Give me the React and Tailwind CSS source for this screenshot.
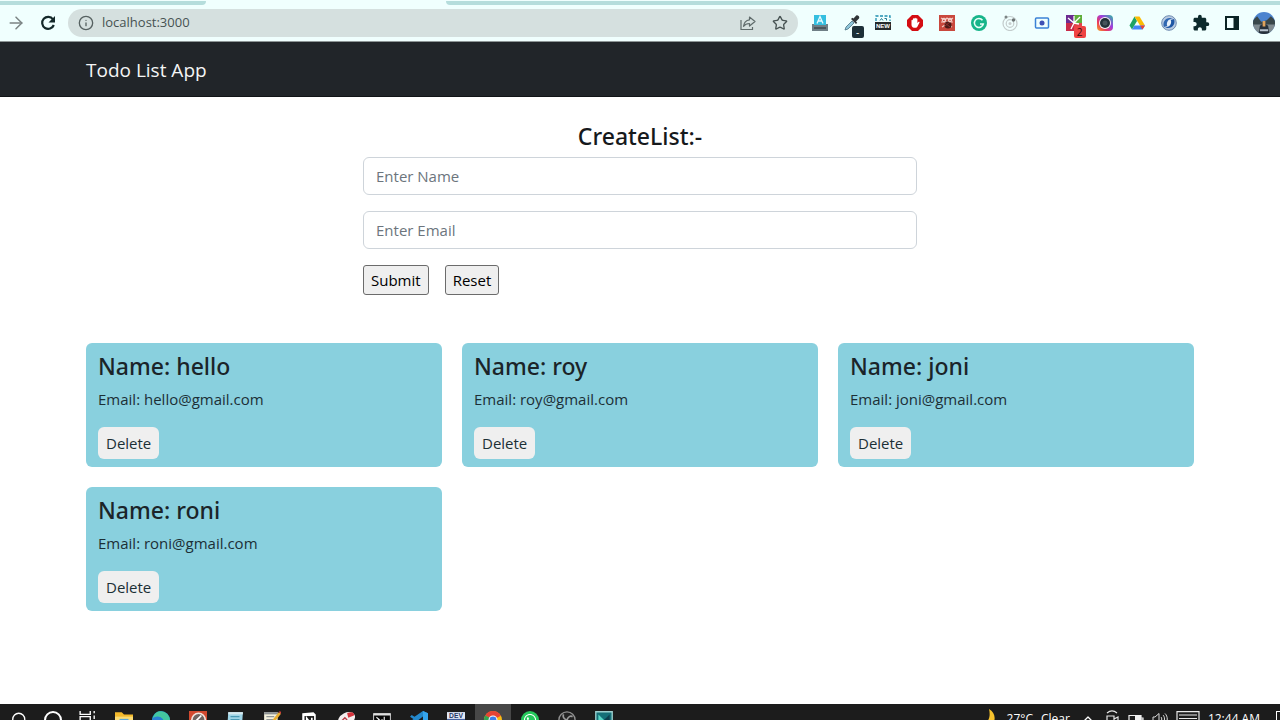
// src/App.jsx
import React, { useState } from 'react';
import { ArrowRight, Info, Star, ChevronUp, Search } from 'lucide-react';
import { MdExtension } from 'react-icons/md';
import { FaWhatsapp } from 'react-icons/fa';

const initialUsers = [
  { id: 1, name: 'hello', email: 'hello@gmail.com' },
  { id: 2, name: 'roy', email: 'roy@gmail.com' },
  { id: 3, name: 'joni', email: 'joni@gmail.com' },
  { id: 4, name: 'roni', email: 'roni@gmail.com' },
];

const Svg = ({ children, className = 'h-4 w-4' }) => (
  <svg viewBox="0 0 16 16" className={className} fill="none" aria-hidden="true">
    {children}
  </svg>
);

const ShareIcon = () => (
  <Svg className="h-4 w-4">
    <path d="M1 5v9.5h11.5V12" stroke="#5f6b6b" strokeWidth="1.2" />
    <path d="M9.5 2l5.500 4.500-5.500 4.500V8.500c-3 0-4.600.8-6 2.800.4-3.300 2.200-6 6-6.500z" stroke="#5f6b6b" strokeWidth="1.2" strokeLinejoin="round" />
  </Svg>
);

const ReloadIcon = () => (
  <Svg className="h-4 w-4">
    <path d="M13 4.300A6 6 0 1 0 13.800 10" stroke="currentColor" strokeWidth="2.200" />
    <path d="M15 1v6.500H8.500z" fill="currentColor" />
  </Svg>
);

// Toolbar extensions
const extensions = [
  {
    name: 'Scanner',
    icon: (
      <Svg>
        <path d="M0 9h16v7H0z" fill="#6f7f86" />
        <path d="M2 12h12v2H2z" fill="#49575d" />
        <path d="M2 0h12v10H2z" fill="#35bfe0" />
        <path d="M5 8.500l3-7 3 7M6.200 6h3.600" stroke="#e8fbff" strokeWidth="1.300" />
      </Svg>
    ),
  },
  {
    name: 'Color picker',
    badge: '-',
    badgeClass: 'bg-[#1d3038] text-white',
    icon: (
      <Svg>
        <path d="M1 15l1-3 6-6 2 2-6 6z" fill="#8fc6da" stroke="#4a7181" strokeWidth=".8" />
        <path d="M7 4l5 5 1.200-1.200-1.200-1.300 3-3c1-1.800-1.200-4-3-2.800L9.500 3.600 8.300 2.700z" fill="#303538" />
      </Svg>
    ),
  },
  {
    name: 'New tab',
    icon: (
      <Svg>
        <path d="M1 6V1h14v5" stroke="#1f8fb0" strokeWidth="1.300" strokeDasharray="3 1.500" />
        <path d="M5 5.500l1.500-2 1.500 2M9.500 3.500h2v2" stroke="#247b91" />
        <path d="M0 7h16v8H0z" fill="#26292b" />
        <text x="8" y="13.200" textAnchor="middle" fontSize="6" fontWeight="700" fill="#fff" fontFamily="Liberation Sans, sans-serif">NEW</text>
      </Svg>
    ),
  },
  {
    name: 'Ad blocker',
    icon: (
      <Svg>
        <path d="M5 0h6l5 5v6l-5 5H5l-5-5V5z" fill="#d40d12" />
        <path d="M4.500 8V5.500c0-.9 1.400-.9 1.400 0V4c0-1 1.500-1 1.500 0v-.5c0-1 1.500-1 1.500 0V4c0-1 1.500-1 1.500 0v4l1-1c.8-.6 1.500.1 1 .8l-2.200 4.200c-1 1.500-5.700 1.200-5.700-2z" fill="#fff" />
      </Svg>
    ),
  },
  {
    name: 'Bug tracker',
    icon: (
      <Svg>
        <path d="M0 0h16v16H0z" fill="#c9483d" />
        <path d="M2 3l4 2 2-2 3 2 3-2M2 7h12M3 12l3-2M13 12l-3-2" stroke="#f4c9c2" strokeWidth="1.200" />
        <circle cx="9" cy="10" r="3.500" fill="#4b1a17" />
        <path d="M6 8l5 4M11 7l-5 4" stroke="#8e302a" />
        <circle cx="5" cy="5" r="1.800" stroke="#f8ded9" />
        <circle cx="11" cy="5" r="1.800" stroke="#f8ded9" />
      </Svg>
    ),
  },
  {
    name: 'Grammar',
    icon: (
      <Svg>
        <circle cx="8" cy="8" r="8" fill="#17b58a" />
        <path d="M11.500 5.200A4.500 4.500 0 1 0 12.300 9H9" stroke="#eafff8" strokeWidth="1.500" />
      </Svg>
    ),
  },
  {
    name: 'Orbit',
    icon: (
      <Svg>
        <circle cx="8" cy="8.500" r="7" stroke="#c3cccc" strokeWidth="1.200" />
        <circle cx="8" cy="8.500" r="3.800" stroke="#c3cccc" strokeWidth="1.200" />
        <circle cx="8" cy="8.500" r="1.500" fill="#c8cfcf" />
        <circle cx="4" cy="2" r="1.500" fill="#7c8585" />
        <circle cx="11.500" cy="5" r="1.700" fill="#6c7474" />
      </Svg>
    ),
  },
  {
    name: 'Screen capture',
    icon: (
      <Svg>
        <rect x="1.500" y="3" width="13" height="10" rx="1" stroke="#3b82d6" strokeWidth="1.500" />
        <circle cx="8" cy="8" r="2.500" fill="#3f51b5" />
      </Svg>
    ),
  },
  {
    name: 'Shopping',
    badge: '2',
    badgeClass: 'bg-[#ef4444] text-[#3a0d0d]',
    icon: (
      <Svg>
        <path d="M0 0h8v8H0z" fill="#6c2c91" />
        <path d="M8 0h8v8H8z" fill="#5fae3a" />
        <path d="M0 8h8v8H0z" fill="#c92c4a" />
        <path d="M8 8h8v8H8z" fill="#e2434a" />
        <path d="M2 3l6 5 6-6M8 8l-3 6M8 1v7M8 8l5 1" stroke="#fff" strokeWidth="1.300" />
      </Svg>
    ),
  },
  {
    name: 'Camera',
    icon: (
      <Svg>
        <defs>
          <linearGradient id="cam" x1="0" y1="1" x2="1" y2="0">
            <stop offset="0" stopColor="#f5ad27" />
            <stop offset=".3" stopColor="#ec3a5b" />
            <stop offset=".6" stopColor="#a03de0" />
            <stop offset="1" stopColor="#28bfa0" />
          </linearGradient>
        </defs>
        <rect width="16" height="16" rx="4" fill="url(#cam)" />
        <circle cx="8" cy="8" r="6" fill="#f4f4f4" />
        <circle cx="8" cy="8" r="5" fill="#24323a" />
        <circle cx="8" cy="8" r="2.500" fill="#47545b" />
      </Svg>
    ),
  },
  {
    name: 'Drive',
    icon: (
      <Svg>
        <path d="M5.500 1.500L.5 10.500 3 14.500 8 6z" fill="#1ea362" />
        <path d="M5.500 1.500h5L16 10.500h-5z" fill="#fbbc04" />
        <path d="M5.500 10.500H16l-2.500 4H3z" fill="#4285f4" />
        <path d="M11 10.500h5l-2.500 4z" fill="#ea4335" />
      </Svg>
    ),
  },
  {
    name: 'Sync',
    icon: (
      <Svg>
        <circle cx="8" cy="8" r="7.300" fill="#b9cbe2" stroke="#6f8bb0" />
        <path d="M3 12C1 7 5 1 12 3.500 7 4 6 6 6 11z" fill="#2f67b1" />
        <path d="M13 4c2 5-2 11-9 8.500C9 12 10 10 10 5z" fill="#1f57a5" />
        <ellipse cx="8" cy="8" rx="1.800" ry="3" transform="rotate(25 8 8)" fill="#e9f1fa" />
      </Svg>
    ),
  },
  { name: 'Extensions', icon: <MdExtension className="h-[18px] w-[18px] text-[#0c2a2c]" /> },
  {
    name: 'Side panel',
    icon: (
      <Svg>
        <path d="M1 1h14v14H1z" fill="#0b2425" />
        <path d="M3 3h6.500v10H3z" fill="#f0fffe" />
      </Svg>
    ),
  },
  {
    name: 'Profile',
    icon: (
      <Svg className="h-[22px] w-[22px]">
        <clipPath id="avatar">
          <circle cx="8" cy="8" r="8" />
        </clipPath>
        <g clipPath="url(#avatar)">
          <path d="M0 0h16v16H0z" fill="#4b84cf" />
          <path d="M0 6l3-3 3 4 4-1 3-3 3 3v4H0z" fill="#39474a" />
          <path d="M0 9h16v7H0z" fill="#7f8a8f" />
          <path d="M5 10l3-2 3 2 1 6H4z" fill="#27313b" />
          <path d="M7 6.500h2v4H7z" fill="#e0a35c" />
          <path d="M5 12.500h6v1.500H5z" fill="#b9c3cf" />
        </g>
      </Svg>
    ),
  },
];

// Pinned taskbar apps
const taskbarApps = [
  {
    name: 'File Explorer',
    icon: <><path d="M0 1h6l2 2h8v12H0z" fill="#f3b92b" /><path d="M0 5h16v10H0z" fill="#fbdc74" /><path d="M4 7h8v3H4z" fill="#5aa7d8" /></>,
  },
  {
    name: 'Edge',
    icon: <><circle cx="8" cy="8" r="8" fill="#1786d0" /><path d="M5 .6c6-2 11 3 11 7.400 0 2-2 3-6 2 1-4-4-6-9.500-3C1 4 3 1.500 5 .6z" fill="#43c7a0" /><path d="M.2 7C3 4 8 4 9.500 8L7 9c-1 2 0 4 2 6C3 15 0 11 .2 7z" fill="#2a7fd4" /></>,
  },
  {
    name: 'Recorder',
    icon: <><path d="M0 0h16v16H0z" fill="#d2492f" /><circle cx="8.500" cy="8" r="6" fill="#6f6461" stroke="#f2e2dc" strokeWidth="1.500" /><path d="M11 4L7 8l4 3" stroke="#fff" strokeWidth="1.500" /></>,
  },
  {
    name: 'Notepad',
    icon: <><path d="M2 1h13l-1 15H1z" fill="#9ed4e6" /><path d="M2 1h13v2H2z" fill="#d7e9ee" /><path d="M4 5h8M4 7.500h8" stroke="#4b9ab5" /></>,
  },
  {
    name: 'Notes',
    icon: <><path d="M1 1h12v15H1z" fill="#f4f1dd" /><path d="M1 1h12v2H1z" fill="#8a8e90" /><path d="M3 5h7M3 7.500h6" stroke="#8f9596" /><path d="M6 11l8-10 2 1.500-8 10z" fill="#e8ad30" /><path d="M14 1l1-1 1.500 1.200L16 2.500z" fill="#d33b3b" /></>,
  },
  {
    name: 'Notion',
    icon: <><path d="M2 2l10-1 2 2v13H2z" fill="#fff" /><path d="M4 4.500h8.500V15H4z" fill="#191919" /><path d="M6 14V6.500l4.500 6V6" stroke="#fff" strokeWidth="1.500" /></>,
  },
  {
    name: 'Snip & Sketch',
    icon: <><ellipse cx="8.500" cy="7" rx="8" ry="5.500" transform="rotate(-28 8.500 7)" fill="#f3eeee" /><path d="M9 2c4-2 7 0 6 2l-5 2z" fill="#d5333c" /><path d="M4 9l3-3 2 2" stroke="#b63b45" strokeWidth="1.200" /></>,
  },
  {
    name: 'Command Prompt',
    icon: <><path d="M.5 2.500h15V15H.5z" fill="#050505" stroke="#b9b9b9" /><path d="M.5 2h15v2H.5z" fill="#dedede" /><path d="M3 5.500l2.500 2L3 9.500M7 8h2M10 5v4" stroke="#eee" /></>,
  },
  {
    name: 'VS Code',
    icon: <><path d="M11.500 0L16 2v12l-4.500 2L4 9 1.500 11 0 10l3-3L0 5l1.500-1.500L4 5z" fill="#2388cc" /><path d="M12 4.500v7L7.500 8z" fill="#1c1c1c" /><path d="M11.500 0L16 2v12l-4.500 2z" fill="#35a5ee" /></>,
  },
  {
    name: 'Dev-C++',
    icon: <><path d="M0 1h16v9l-8 6-8-6z" fill="#45619f" /><path d="M0 1h16v6H0z" fill="#e3e8f5" /><text x="8" y="6.500" textAnchor="middle" fontSize="6" fontWeight="700" fill="#243766" fontFamily="Liberation Sans, sans-serif">DEV</text></>,
  },
  {
    name: 'Chrome',
    active: true,
    icon: <><circle cx="8" cy="8" r="8" fill="#f9bc15" /><path d="M8 8L1.100 4A8 8 0 0 1 15 4.200z" fill="#e54335" /><path d="M1.100 4A8 8 0 0 0 8 16l3-7z" fill="#31a353" /><circle cx="8" cy="8" r="4" fill="#fff" /><circle cx="8" cy="8" r="3.100" fill="#3f7ee8" /></>,
  },
  {
    name: 'WhatsApp',
    custom: (
      <span className="flex h-[18px] w-[18px] items-center justify-center rounded-full bg-[#25c95b]">
        <FaWhatsapp className="h-[14px] w-[14px] text-white" />
      </span>
    ),
  },
  {
    name: 'OBS',
    icon: <><circle cx="8" cy="8" r="7.200" fill="#222" stroke="#8f8f8f" strokeWidth="1.200" /><path d="M8 8C5 7 4 5 5 3M8 8c1-3 3-4 5-3M8 8c0 3-2 5-5 4" stroke="#9a9a9a" strokeWidth="1.500" /></>,
  },
  {
    name: 'Filmora',
    icon: <><path d="M.7.700h14.600v14.600H.7z" fill="#156f77" stroke="#9ccfce" strokeWidth="1.200" /><path d="M3 3l5 5-5 5z" fill="#56d5c4" /><path d="M13 3L8 8l5 5z" fill="#0e3f4e" /></>,
  },
];

const BrowserBar = () => (
  <header className="flex-none border-b border-[#8e9696] bg-[#f0fffe]">
    <div className="flex h-[5px] justify-between gap-60 bg-[#f0fffe] pt-px">
      <div className="w-[206px] flex-none rounded-br bg-[#b5dddc]"></div>
      <div className="flex-1 rounded-bl bg-[#b5dddc]"></div>
    </div>
    <div className="flex h-9 items-center">
      <button className="flex w-8 justify-center text-[#7b8484]" aria-label="Forward">
        <ArrowRight className="h-5 w-5" strokeWidth={1.8} />
      </button>
      <button className="flex w-8 justify-center text-[#14292a]" aria-label="Reload">
        <ReloadIcon />
      </button>
      <div className="ml-1 mr-1.5 flex h-7 flex-1 items-center rounded-full bg-[#d5e0df] px-2.5">
        <Info className="h-4 w-4 text-[#566161]" strokeWidth={2} />
        <input
          aria-label="Address"
          defaultValue="localhost:3000"
          className="ml-2 min-w-0 flex-1 bg-transparent text-[13px] text-[#465252] outline-none"
        />
        <button aria-label="Share"><ShareIcon /></button>
        <button className="ml-4" aria-label="Bookmark">
          <Star className="h-4 w-4 text-[#485353]" strokeWidth={2} />
        </button>
      </div>
      <div className="grid w-[476px] flex-none grid-cols-15">
        {extensions.map((ext) => (
          <button key={ext.name} aria-label={ext.name} className="flex justify-center">
            <span className="relative flex h-[22px] items-center">
              {ext.icon}
              {ext.badge && (
                <span
                  className={`absolute -right-1 -bottom-1 h-3 w-3 rounded-xs text-center text-[10px] leading-3 ${ext.badgeClass}`}
                >
                  {ext.badge}
                </span>
              )}
            </span>
          </button>
        ))}
      </div>
    </div>
  </header>
);

const CreateList = ({ onAdd }) => {
  const [name, setName] = useState('');
  const [email, setEmail] = useState('');

  const handleReset = () => {
    setName('');
    setEmail('');
  };

  const handleSubmit = (e) => {
    e.preventDefault();
    if (!name || !email) return;
    onAdd({ id: Date.now(), name, email });
    handleReset();
  };

  const inputClass =
    'h-[38px] w-full rounded-md border border-[#ced4da] bg-white px-3 text-[15px] text-[#212529] placeholder:text-[#6c757d]';
  const buttonClass = 'h-[30px] rounded-[3px] border border-[#6b6b6b] bg-[#efefef] px-[7px] text-[15px] text-black';

  return (
    <section className="mx-auto w-1/2">
      <h2 className="mb-1.5 text-center font-['Noto_Sans',sans-serif] text-[23px] leading-[30px] font-medium text-[#16191c]">
        CreateList:-
      </h2>
      <form onSubmit={handleSubmit} className="flex flex-col gap-4">
        <input
          type="text"
          aria-label="Name"
          placeholder="Enter Name"
          value={name}
          onChange={(e) => setName(e.target.value)}
          className={inputClass}
        />
        <input
          type="email"
          aria-label="Email"
          placeholder="Enter Email"
          value={email}
          onChange={(e) => setEmail(e.target.value)}
          className={inputClass}
        />
        <div className="flex gap-4">
          <button type="submit" className={buttonClass}>Submit</button>
          <button type="button" onClick={handleReset} className={buttonClass}>Reset</button>
        </div>
      </form>
    </section>
  );
};

const UserCard = ({ user, onDelete }) => (
  <div className="rounded-md bg-[#89d0de] px-3 py-2 text-[#1c2f36]">
    <h3 className="mb-1.5 font-['Noto_Sans',sans-serif] text-[23px] leading-[30px] font-medium text-[#1b2429]">
      Name: {user.name}
    </h3>
    <p className="mb-4 text-[15px] leading-6">Email: {user.email}</p>
    <button
      onClick={() => onDelete(user.id)}
      className="block h-8 rounded-md bg-[#efefef] px-2 text-[15px]"
    >
      Delete
    </button>
  </div>
);

const Taskbar = () => (
  <footer className="h-4 flex-none overflow-hidden bg-[#1c1c1c] text-white">
    <div className="flex h-8 items-center">
      <div className="grid w-[106px] grid-cols-3 justify-items-center">
        <button aria-label="Search"><Search className="h-[18px] w-[18px] -scale-x-100" strokeWidth={1.8} /></button>
        <button aria-label="Cortana" className="h-[18px] w-[18px] rounded-full border-2 border-white"></button>
        <button aria-label="Task View">
          <Svg className="h-[18px] w-[18px]">
            <path d="M1 0v3h9V0M1 5h9v6H1zM1 16v-3h9v3M13.500 0v2M13.500 4v3M13.500 9v7" stroke="#fff" strokeWidth="1.200" />
          </Svg>
        </button>
      </div>
      <div className="grid w-[516px] grid-cols-14">
        {taskbarApps.map((app) => (
          <button
            key={app.name}
            aria-label={app.name}
            className={`flex h-8 items-center justify-center ${app.active ? 'bg-[#474747]' : ''}`}
          >
            {app.custom || <Svg className="h-[18px] w-[18px]">{app.icon}</Svg>}
          </button>
        ))}
      </div>
      <div className="ml-auto flex items-center pb-0.5 text-[12px] whitespace-nowrap">
        <Svg className="h-5 w-5">
          <path d="M8 0c7 4 6 14-4 15-2 0-3-1-4-2 6 0 10-5 8-13z" fill="#f6c22d" />
        </Svg>
        <span className="ml-2 flex gap-2">
          <span>27°C</span>
          <span>Clear</span>
        </span>
        <ChevronUp className="ml-2.5 h-4 w-4" strokeWidth={2} />
        <Svg className="ml-2 h-[18px] w-4">
          <path d="M3 2c3-2.500 7-2.500 10 0M3 5h7v10H3zM10 8l4-2v7l-4-2" stroke="#e6e6e6" strokeWidth="1.200" />
        </Svg>
        <Svg className="ml-2 h-4 w-4">
          <path d="M1 4.500h12v7H1zM13 7h2v2h-2" stroke="#f1f1f1" strokeWidth="1.200" />
          <path d="M7 5h6v6H7z" fill="#f1f1f1" />
        </Svg>
        <Svg className="ml-2 h-4 w-4">
          <path d="M1 6h2l4-3.500v11L3 10H1zM9 6c1 1 1 3 0 4M11 4c2 2 2 6 0 8M13 2.500c3 3 3 8 0 11" stroke="#d9d9d9" />
        </Svg>
        <svg viewBox="0 0 24 16" className="ml-2 h-4 w-6" fill="none" aria-hidden="true">
          <path d="M1 .6h22v14.800H1zM3 4h18M3 7.500h18M5 11h14" stroke="#e8e8e8" strokeWidth="1.200" />
        </svg>
        <span className="ml-2">12:44 AM</span>
        <button aria-label="Notifications" className="ml-4 h-4 w-1 border border-r-0 border-white"></button>
      </div>
    </div>
  </footer>
);

const App = () => {
  const [users, setUsers] = useState(initialUsers);

  const addUser = (user) => setUsers([...users, user]);
  const deleteUser = (id) => setUsers(users.filter((user) => user.id !== id));

  return (
    <div className="flex h-screen flex-col overflow-hidden bg-white font-['Open_Sans','Noto_Sans',sans-serif]">
      <BrowserBar />
      <nav className="flex-none border-b border-[#111417] bg-[#212529] px-[86px]">
        <div className="mx-auto flex h-[54px] max-w-[1108px] items-center pt-0.5">
          <a href="#" className="text-[19px] text-[#f4f5f5]">Todo List App</a>
        </div>
      </nav>

      <main className="min-h-0 flex-1 overflow-hidden px-[86px] pt-6">
        <div className="mx-auto max-w-[1108px]">
          <CreateList onAdd={addUser} />
          <div className="mt-12 grid grid-cols-3 gap-5">
            {users.map((user) => (
              <UserCard key={user.id} user={user} onDelete={deleteUser} />
            ))}
          </div>
        </div>
      </main>
      <Taskbar />
    </div>
  );
};

export default App;
